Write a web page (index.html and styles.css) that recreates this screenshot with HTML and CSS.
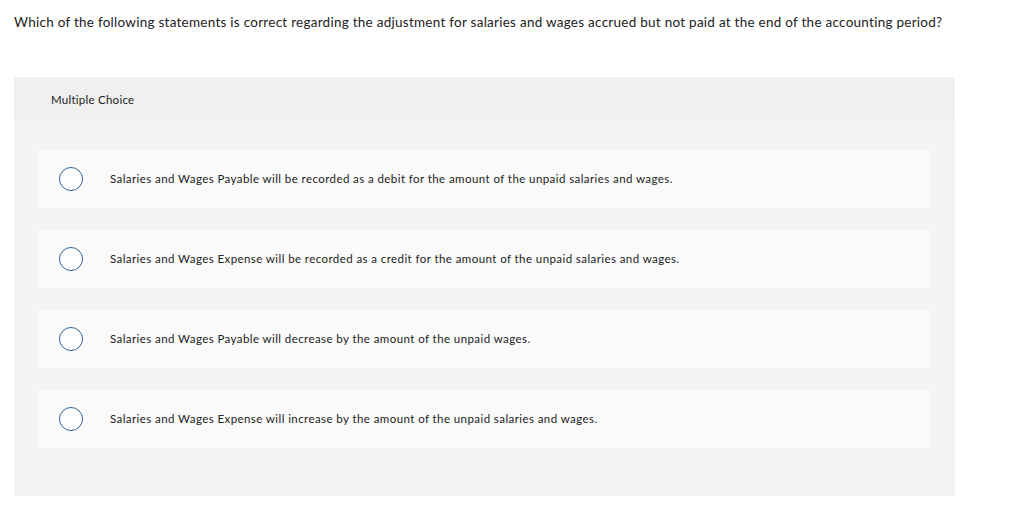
FILE: index.html
```html
<!DOCTYPE html>
<html>
<head>
<meta charset="utf-8">
<link rel="stylesheet" href="styles.css">
</head>
<body>
<p class="question">Which of the following statements is correct regarding the adjustment for salaries and wages accrued but not paid at the end of the accounting period?</p>
<div class="mc">
  <div class="mc-head">Multiple Choice</div>
  <div class="mc-body">
    <div class="opt"><span class="radio"></span><span class="opt-text">Salaries and Wages Payable will be recorded as a debit for the amount of the unpaid salaries and wages.</span></div>
    <div class="opt"><span class="radio"></span><span class="opt-text">Salaries and Wages Expense will be recorded as a credit for the amount of the unpaid salaries and wages.</span></div>
    <div class="opt"><span class="radio"></span><span class="opt-text">Salaries and Wages Payable will decrease by the amount of the unpaid wages.</span></div>
    <div class="opt"><span class="radio"></span><span class="opt-text">Salaries and Wages Expense will increase by the amount of the unpaid salaries and wages.</span></div>
  </div>
</div>
</body>
</html>
```
FILE: styles.css
```css
body {
  margin: 0;
  background: #fff;
  font-family: Lato, "Open Sans", sans-serif;
  color: #222;
}
.question {
  margin: 0;
  padding: 14px 14px 0 14px;
  font-size: 13.5px;
  letter-spacing: 0.26px;
  line-height: 17px;
}
.mc {
  margin: 46px 0 0 14px;
  width: 941px;
  background: #f4f4f4;
  border-radius: 2px;
  padding-bottom: 48px;
}
.mc-head {
  height: 44px;
  background: #f0f0f0;
  display: flex;
  align-items: center;
  padding-left: 37px;
  font-size: 11.5px;
  letter-spacing: 0.25px;
  border-radius: 2px 2px 0 0;
}
.mc-body {
  padding: 29px 25px 0 23px;
  display: flex;
  flex-direction: column;
  gap: 22px;
}
.opt {
  height: 58px;
  background: #fafafa;
  border-radius: 3px;
  display: flex;
  align-items: center;
  padding-left: 22px;
}
.radio {
  width: 22px;
  height: 22px;
  border: 1.5px solid #2b5f95;
  border-radius: 50%;
  background: #fff;
  flex: none;
}
.opt-text {
  margin-left: 27px;
  margin-bottom: 1px;
  font-size: 11.5px;
  letter-spacing: 0.42px;
}
```
